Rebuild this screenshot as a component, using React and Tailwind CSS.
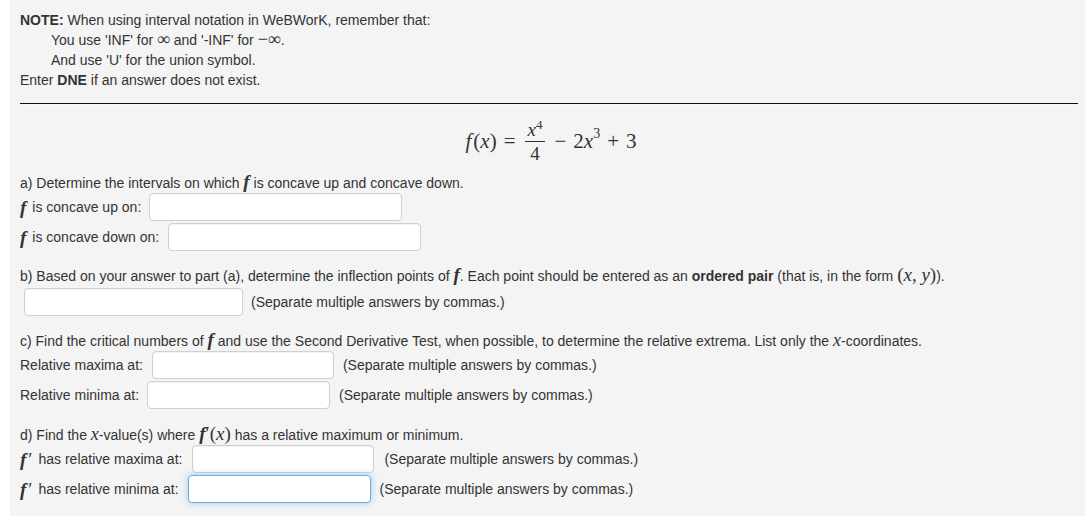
import React from 'react';

const mathFont = { fontFamily: '"Liberation Serif", "DejaVu Serif", serif' };

function F({ prime }) {
  return (
    <span className="italic text-[19px] leading-none font-semibold" style={mathFont}>
      f{prime ? <span className="not-italic font-normal ml-[2px]">&#8242;</span> : null}
    </span>
  );
}

function V({ children }) {
  return (
    <span className="italic text-[18px] leading-none" style={mathFont}>
      {children}
    </span>
  );
}

function Field({ w, focus }) {
  return (
    <input
      type="text"
      className={`h-[28px] ${w} bg-white rounded-[4px] border px-2 outline-none ${
        focus
          ? 'border-[#7aa9d4] shadow-[0_0_7px_rgba(82,168,236,0.55)]'
          : 'border-[#d0d0d0] shadow-[inset_0_1px_1px_rgba(0,0,0,0.06)]'
      }`}
    />
  );
}

function Row({ children }) {
  return <div className="h-[30px] flex items-center">{children}</div>;
}

function Line({ children, className = '' }) {
  return <div className={`h-[20px] whitespace-nowrap ${className}`}>{children}</div>;
}

const sep = '(Separate multiple answers by commas.)';

export default function App() {
  return (
    <div
      className="min-h-screen bg-white pl-[10px] text-[14px] leading-[20px] text-[#333]"
      style={{ fontFamily: '"Liberation Sans", Arial, sans-serif' }}
    >
      <div className="bg-[#f4f4f4] min-h-screen pt-[10px] pl-[10px] pr-[7px]">
        <Line>
          <b>NOTE:</b> When using interval notation in WeBWorK, remember that:
        </Line>
        <Line className="pl-[31px]">
          You use 'INF' for <span style={mathFont} className="text-[18px] leading-none">∞</span> and '-INF' for{' '}
          <span style={mathFont} className="text-[18px] leading-none">−∞</span>.
        </Line>
        <Line className="pl-[31px]">And use 'U' for the union symbol.</Line>
        <Line>
          Enter <b>DNE</b> if an answer does not exist.
        </Line>

        <div className="mt-[13px] h-[1px] bg-[#111]" />
        <div className="h-[1px] bg-[#fafafa]" />

        {/* formula */}
        <div className="h-[67px] pt-[5px] flex items-center justify-center" style={mathFont}>
          <div className="flex items-center text-[21px] leading-none pl-[4px]">
            <span className="italic">f</span>
            <span className="ml-[2px]">(</span>
            <span className="italic">x</span>
            <span>)</span>
            <span className="mx-[7px]">=</span>
            <span className="inline-flex flex-col items-center mx-[2px] text-[19px] leading-[19px]">
              <span className="px-[3px]">
                <span className="italic">x</span>
                <sup className="text-[13px]">4</sup>
              </span>
              <span className="w-full h-[1px] bg-[#333] my-[2px]" />
              <span>4</span>
            </span>
            <span className="mx-[7px]">−</span>
            <span>2</span>
            <span className="italic">x</span>
            <sup className="text-[14px] relative -top-[7px]">3</sup>
            <span className="mx-[7px]">+</span>
            <span>3</span>
          </div>
        </div>

        {/* a */}
        <Line>
          a) Determine the intervals on which <F /> is concave up and concave down.
        </Line>
        <Row>
          <F />
          <span className="ml-[6px] mr-[8px]">is concave up on:</span>
          <Field w="w-[253px]" />
        </Row>
        <Row>
          <F />
          <span className="ml-[6px] mr-[9px]">is concave down on:</span>
          <Field w="w-[253px]" />
        </Row>

        {/* b */}
        <Line className="mt-[13px]">
          b) Based on your answer to part (a), determine the inflection points of <F />. Each point should be
          entered as an <b>ordered pair</b> (that is, in the form{' '}
          <span style={mathFont} className="text-[19px] leading-none">
            (<span className="italic">x</span>, <span className="italic">y</span>)
          </span>
          ).
        </Line>
        <div className="mt-[2px]">
          <Row>
            <span className="ml-[4px]" />
            <Field w="w-[219px]" />
            <span className="ml-[8px]">{sep}</span>
          </Row>
        </div>

        {/* c */}
        <Line className="mt-[13px]">
          c) Find the critical numbers of <F /> and use the Second Derivative Test, when possible, to determine the
          relative extrema. List only the <V>x</V>-coordinates.
        </Line>
        <Row>
          <span className="mr-[9px]">Relative maxima at:</span>
          <Field w="w-[182px]" />
          <span className="ml-[9px]">{sep}</span>
        </Row>
        <Row>
          <span className="mr-[8px]">Relative minima at:</span>
          <Field w="w-[183px]" />
          <span className="ml-[9px]">{sep}</span>
        </Row>

        {/* d */}
        <Line className="mt-[14px]">
          d) Find the <V>x</V>-value(s) where{' '}
          <span style={mathFont} className="text-[19px] leading-none">
            <span className="italic font-semibold">f</span>′(<span className="italic">x</span>)
          </span>{' '}
          has a relative maximum or minimum.
        </Line>
        <Row>
          <F prime />
          <span className="ml-[6px] mr-[10px]">has relative maxima at:</span>
          <Field w="w-[182px]" />
          <span className="ml-[10px]">{sep}</span>
        </Row>
        <Row>
          <F prime />
          <span className="ml-[6px] mr-[9px]">has relative minima at:</span>
          <Field w="w-[183px]" focus />
          <span className="ml-[9px]">{sep}</span>
        </Row>
      </div>
    </div>
  );
}
